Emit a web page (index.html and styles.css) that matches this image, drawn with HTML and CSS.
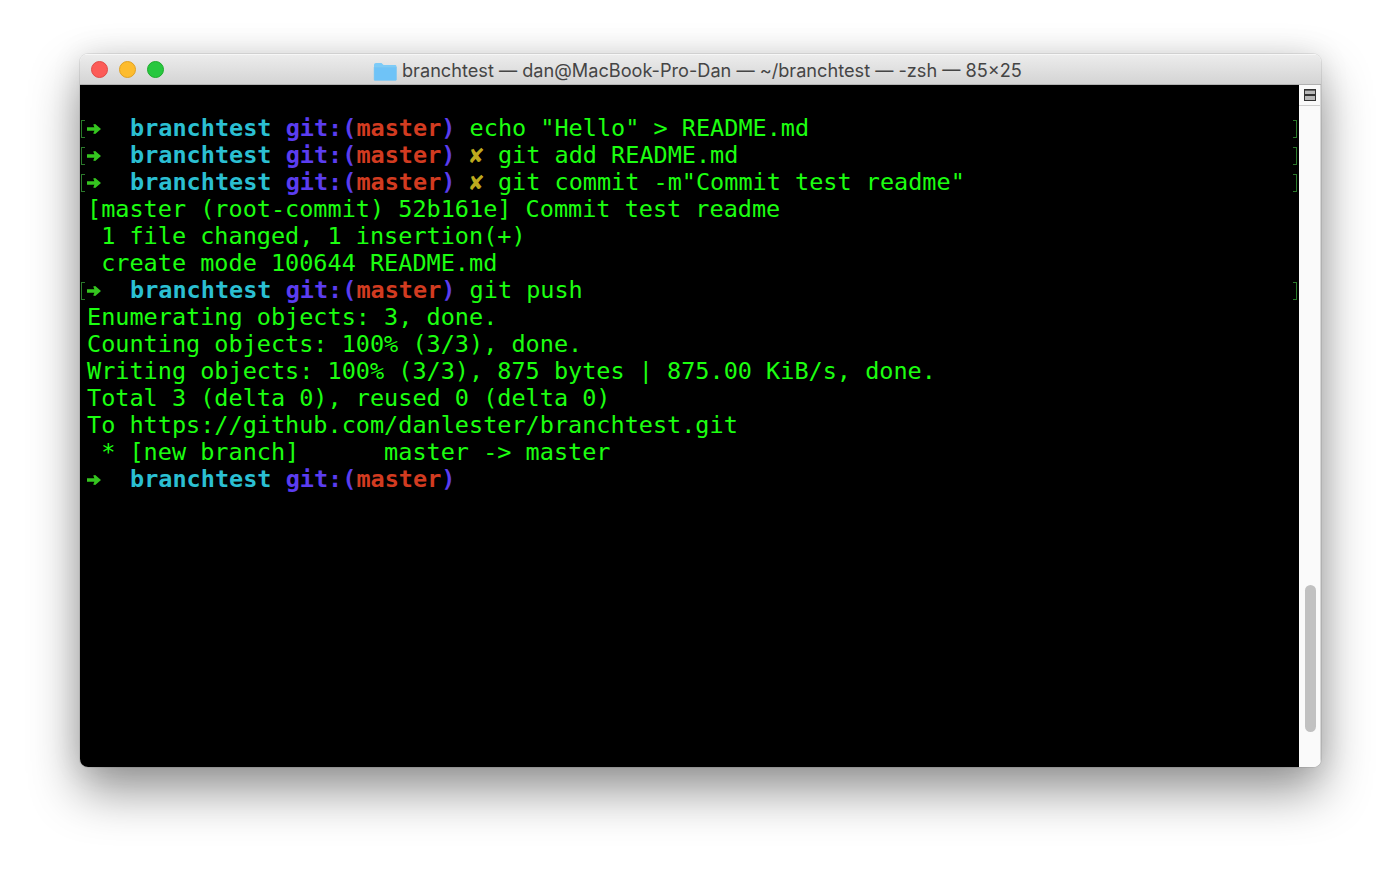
FILE: index.html
```html
<!DOCTYPE html>
<html lang="en">
<head>
<meta charset="utf-8">
<title>branchtest</title>
<link rel="stylesheet" href="styles.css">
</head>
<body>
<svg class="defs" width="0" height="0" aria-hidden="true"><defs>
  <symbol id="arrow" viewBox="0 0 14 10"><path d="M0 3.3H7.4L6.2 0.4L8.2 0L14 5L8.2 10L6.2 9.6L7.4 6.7H0Z" fill="currentColor"/></symbol>
</defs></svg>
<main class="window">
  <header class="titlebar">
    <div class="lights">
      <span class="light red"></span><span class="light yellow"></span><span class="light green"></span>
    </div>
    <div class="title">
      <svg class="folder" width="24" height="19" viewBox="0 0 24 19"><path d="M1 3.2C1 1.9 1.8 1 3 1H8.5L10.5 3H22C23 3 23.5 3.6 23.5 4.6V17C23.5 18 23 18.5 22 18.5H2.5C1.5 18.5 1 18 1 17Z" fill="#7ccbf8"/><path d="M1 5H23.5V17C23.5 18 23 18.5 22 18.5H2.5C1.5 18.5 1 18 1 17Z" fill="#6fc3f7" stroke="#8fc8ea" stroke-width=".5"/></svg>
      <span class="title-text">branchtest — dan@MacBook-Pro-Dan — ~/branchtest — -zsh — 85×25</span>
    </div>
  </header>
  <div class="body">
    <section class="terminal">
      <div class="row"></div>
      <div class="row"><i class="bl"></i><svg class="arrow"><use href="#arrow"/></svg><span class="cmd"><b class="dir">branchtest</b> <b class="git">git:</b><b class="paren">(</b><b class="branch">master</b><b class="paren">)</b> echo "Hello" &gt; README.md</span><i class="br"></i></div>
      <div class="row"><i class="bl"></i><svg class="arrow"><use href="#arrow"/></svg><span class="cmd"><b class="dir">branchtest</b> <b class="git">git:</b><b class="paren">(</b><b class="branch">master</b><b class="paren">)</b> <b class="x">✘</b> git add README.md</span><i class="br"></i></div>
      <div class="row"><i class="bl"></i><svg class="arrow"><use href="#arrow"/></svg><span class="cmd"><b class="dir">branchtest</b> <b class="git">git:</b><b class="paren">(</b><b class="branch">master</b><b class="paren">)</b> <b class="x">✘</b> git commit -m"Commit test readme"</span><i class="br"></i></div>
      <div class="row out">[master (root-commit) 52b161e] Commit test readme</div>
      <div class="row out"> 1 file changed, 1 insertion(+)</div>
      <div class="row out"> create mode 100644 README.md</div>
      <div class="row"><i class="bl"></i><svg class="arrow"><use href="#arrow"/></svg><span class="cmd"><b class="dir">branchtest</b> <b class="git">git:</b><b class="paren">(</b><b class="branch">master</b><b class="paren">)</b> git push</span><i class="br"></i></div>
      <div class="row out">Enumerating objects: 3, done.</div>
      <div class="row out">Counting objects: 100% (3/3), done.</div>
      <div class="row out">Writing objects: 100% (3/3), 875 bytes | 875.00 KiB/s, done.</div>
      <div class="row out">Total 3 (delta 0), reused 0 (delta 0)</div>
      <div class="row out">To https://github.com/danlester/branchtest.git</div>
      <div class="row out"> * [new branch]      master -&gt; master</div>
      <div class="row"><i class="bl off"></i><svg class="arrow"><use href="#arrow"/></svg><span class="cmd"><b class="dir">branchtest</b> <b class="git">git:</b><b class="paren">(</b><b class="branch">master</b><b class="paren">)</b></span></div>
    </section>
    <aside class="scrollbar">
      <div class="split">
        <svg width="12" height="12" viewBox="0 0 12 12"><rect x=".5" y=".5" width="11" height="11" fill="#b9b9b9" stroke="#333"/><path d="M1 6H11" stroke="#333" stroke-width="2"/><path d="M1 1.5H11" stroke="#666"/></svg>
      </div>
      <div class="track"><div class="thumb"></div></div>
    </aside>
  </div>
</main>
</body>
</html>
```
FILE: styles.css
```css
* { box-sizing: border-box; }
html, body { margin: 0; height: 100%; background: #fff; overflow: hidden; }
body { padding: 54px 79px 105px 80px; }
.defs { position: absolute; }

.window {
  height: 713px;
  display: flex;
  flex-direction: column;
  border-radius: 8px;
  overflow: hidden;
  box-shadow: 0 0 0 1px rgba(0,0,0,.08), 0 24px 50px rgba(0,0,0,.42), 0 0 30px rgba(0,0,0,.1);
}
.titlebar {
  height: 31px;
  flex: none;
  display: flex;
  align-items: center;
  position: relative;
  background: linear-gradient(#ececec, #d4d4d4);
  border-top: 1px solid #f7f7f7;
  border-bottom: 1px solid #b1b1b1;
}
.lights { display: flex; gap: 11px; padding-left: 11px; }
.light { width: 17px; height: 17px; border-radius: 50%; border: 1px solid; }
.red { background: #fc5b57; border-color: #e04a46; }
.yellow { background: #fdbc2e; border-color: #dfa023; }
.green { background: #27c83f; border-color: #1eaa2c; }
.title {
  position: absolute;
  left: 293px;
  top: 5px;
  display: flex;
  align-items: center;
  gap: 5px;
  font: 18.17px/20px Inter, "Liberation Sans", Arial, sans-serif;
  color: #454545;
  white-space: pre;
}
.title-text { padding-bottom: 2px; }

.body { flex: 1; display: flex; min-height: 0; }
.terminal {
  flex: 1;
  background: #000;
  padding: 3px 0 0;
  font: 23.5px/27px "DejaVu Sans Mono", monospace;
  color: #1cff10;
}
.row { height: 27px; display: flex; align-items: center; padding-left: 1px; white-space: pre; }
.row.out { padding-left: 7px; }
b { font-weight: 700; }
.bl, .br { width: 4px; height: 18px; border: 1px solid #2b7a2b; flex: none; }
.bl { border-right: 0; margin-right: 2px; }
.bl.off { border-color: transparent; }
.br { border-left: 0; margin-left: auto; margin-right: 2px; }
.arrow { width: 14px; height: 10px; margin-right: 29px; color: #35c51f; flex: none; }
.dir { color: #2bbfd2; }
.git, .paren { color: #5b3df0; }
.branch { color: #d23b20; }
.x { color: #bdaa1e; }

.scrollbar {
  width: 22px;
  flex: none;
  display: flex;
  flex-direction: column;
  background: #fafafa;
  border-right: 1px solid #d6d6d6;
}
.split {
  height: 21px;
  flex: none;
  display: flex;
  align-items: center;
  justify-content: center;
  border-bottom: 1px solid #cfcfcf;
}
.track { flex: 1; display: flex; flex-direction: column; justify-content: flex-end; padding: 0 4px 35px 6px; }
.thumb { height: 147px; border-radius: 6px; background: #c1c1c1; }
```
